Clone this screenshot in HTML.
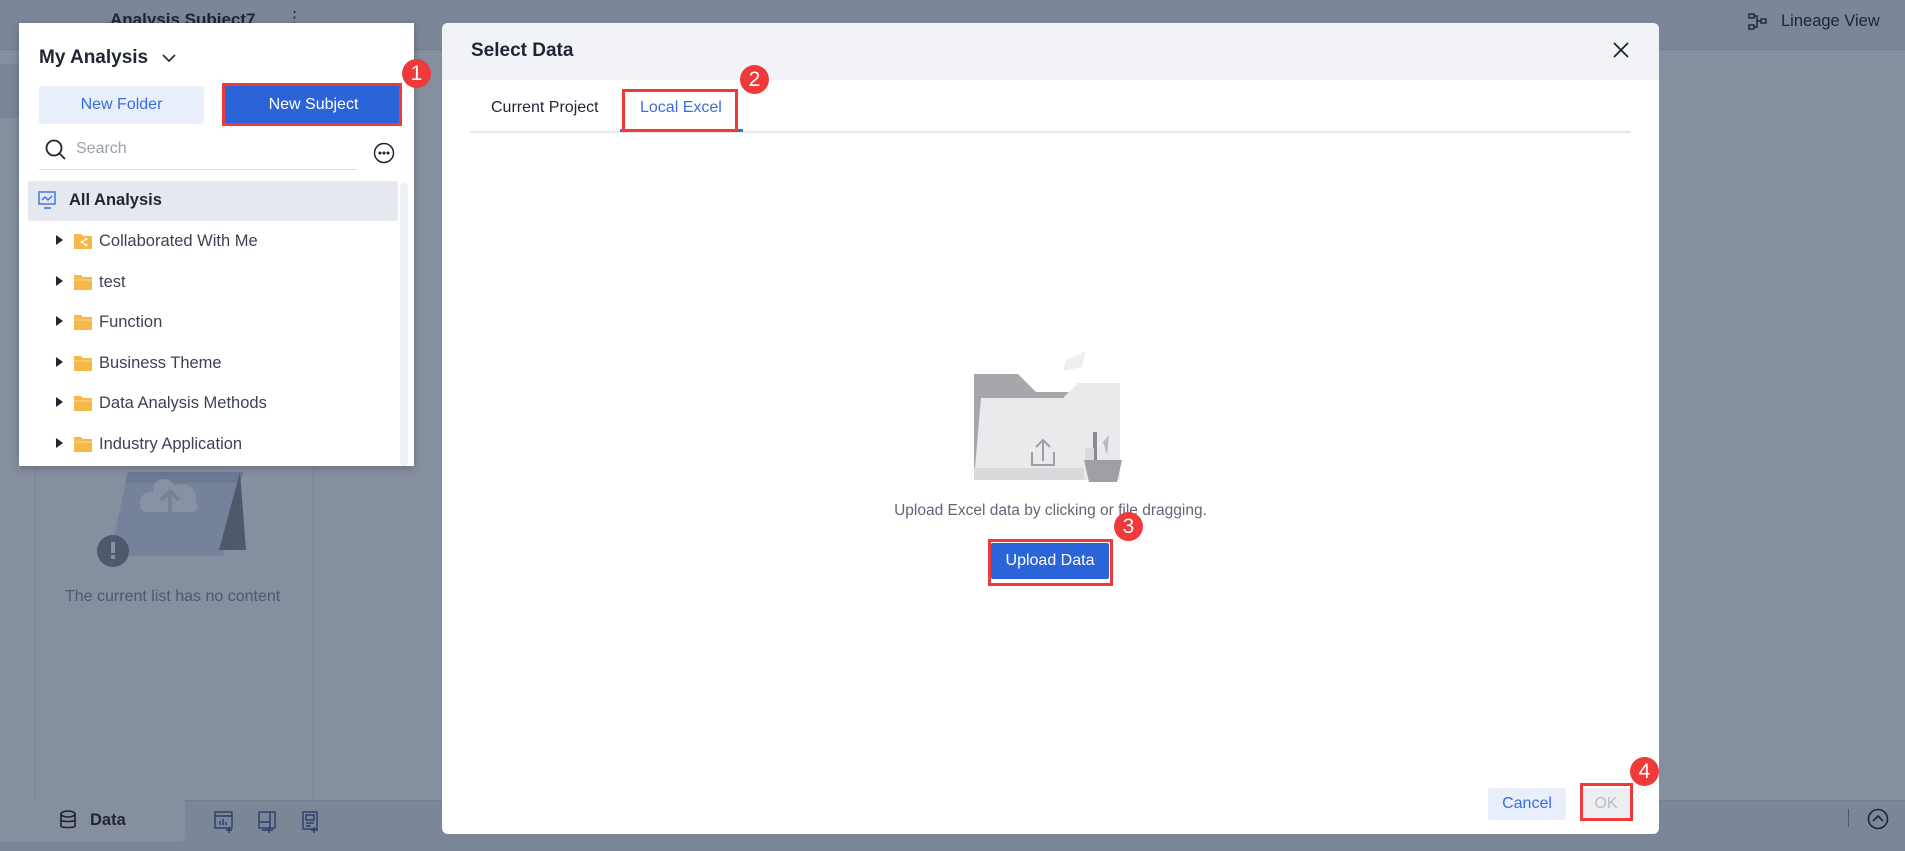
<!DOCTYPE html>
<html><head><meta charset="utf-8"><style>
*{margin:0;padding:0;box-sizing:border-box}
body{width:1905px;height:851px;overflow:hidden;background:#868fa0;font-family:"Liberation Sans",Arial,sans-serif;position:relative}
.abs{position:absolute}
.badge{position:absolute;width:29px;height:29px;border-radius:50%;background:#f03a3a;color:#fff;font-size:21px;text-align:center;line-height:29px}
.redbox{position:absolute;border:3px solid #f03a3a}
.item{position:absolute;left:0;width:370px;height:40px;font-size:16.5px;color:#3b4252;line-height:40px;white-space:nowrap}
.tri{position:absolute;left:37px;top:14px;width:0;height:0;border-left:7px solid #1f2533;border-top:5.5px solid transparent;border-bottom:5.5px solid transparent}
.fold{position:absolute;left:55px;top:12px;width:18px;height:16px}
.item span{position:absolute;left:80px}
</style></head><body>
<!-- top bar -->
<div class="abs" style="left:0;top:0;width:1905px;height:50px;background:#7c8699;border-bottom:1px solid #737d90"></div>
<div class="abs" style="left:110px;top:10px;font-size:17px;font-weight:bold;color:#1f2533">Analysis Subject7</div>
<div class="abs" style="left:286px;top:8px;font-size:17px;color:#1f2533">⋮</div>
<svg class="abs" style="left:1748px;top:13px" width="20" height="18" viewBox="0 0 20 18" fill="none" stroke="#1f2533" stroke-width="1.4"><rect x="1" y="1" width="5" height="4"/><rect x="1" y="12" width="5" height="4"/><path d="M6 3h3v11H6M9 8h4"/><rect x="13" y="6" width="5" height="4"/></svg>
<div class="abs" style="left:1781px;top:12px;font-size:16.5px;color:#1f2533">Lineage View</div>
<!-- left sidebar -->
<div class="abs" style="left:35px;top:50px;width:1px;height:750px;background:#7a8496"></div>
<div class="abs" style="left:313px;top:50px;width:1px;height:750px;background:#7a8496"></div>
<div class="abs" style="left:0;top:64px;width:35px;height:54px;background:#7c8699"></div>
<!-- calendar illus -->
<svg class="abs" style="left:95px;top:470px" width="160" height="100" viewBox="0 0 160 100">
<path d="M33 2h115l-20 84H15z" fill="#76829a"/><path d="M33 2h115l-3 11H30z" fill="#6d7990"/>
<path d="M145 2l6 78h-27z" fill="#4e5a6c"/>
<circle cx="69" cy="20" r="11" fill="#8791a3"/><circle cx="87" cy="28" r="14" fill="#8791a3"/><circle cx="55" cy="32" r="10" fill="#8791a3"/><rect x="45" y="30" width="58" height="12" rx="6" fill="#8791a3"/>
<path d="M75 45V22M66 30l9-9 9 9" stroke="#76829a" stroke-width="4" fill="none"/>
<circle cx="18" cy="81" r="16" fill="#4e5a6c"/><rect x="16" y="72" width="4" height="11" fill="#8791a3"/><rect x="16" y="85" width="4" height="4" fill="#8791a3"/>
</svg>
<div class="abs" style="left:65px;top:588px;font-size:16px;color:#4e5a6c">The current list has no content</div>
<!-- bottom bar -->
<div class="abs" style="left:0;top:800px;width:1905px;height:51px;background:#7c8699;border-top:1px solid #737d90"></div>
<div class="abs" style="left:0;top:800px;width:185px;height:42px;background:#868fa0;border-radius:0 0 6px 0"></div>
<svg class="abs" style="left:59px;top:810px" width="18" height="20" viewBox="0 0 18 20" fill="none" stroke="#1f2533" stroke-width="1.6"><ellipse cx="9" cy="4" rx="7" ry="3"/><path d="M2 4v12c0 2 14 2 14 0V4M2 10c0 2 14 2 14 0"/></svg>
<div class="abs" style="left:90px;top:811px;font-size:16.5px;font-weight:bold;color:#1f2533">Data</div>
<svg class="abs" style="left:214px;top:811px" width="110" height="22" fill="none" stroke="#2d3f66" stroke-width="1.4"><rect x="1" y="1" width="17" height="16"/><path d="M1 5h17M6 14v-4M9 14V8M12 14v-3M15 16v6M12 19h6" /><rect x="45" y="1" width="16" height="16"/><path d="M45 11h11M56 1v16M48 19h8M55 16v6M52 19h7"/><rect x="89" y="1" width="14" height="17"/><path d="M92 4h8v5h-8zM92 12h8M92 15h5M100 16v6M97 19h7"/></svg>
<div class="abs" style="left:1848px;top:809px;width:1px;height:18px;background:#4e5a6c"></div>
<svg class="abs" style="left:1867px;top:808px" width="22" height="22" fill="none" stroke="#1f2533" stroke-width="1.6"><circle cx="11" cy="11" r="9.5"/><path d="M6 13l5-5 5 5"/></svg>

<!-- left popup -->
<div class="abs" style="left:19px;top:23px;width:395px;height:443px;background:#fff;box-shadow:0 2px 8px rgba(0,0,0,.25)">
 <div class="abs" style="left:20px;top:24px;font-size:19px;font-weight:bold;color:#1f2533">My Analysis</div>
 <svg class="abs" style="left:142px;top:30px" width="16" height="10" fill="none" stroke="#1f2533" stroke-width="1.6"><path d="M2 2l6 6 6-6"/></svg>
 <div class="abs" style="left:20px;top:63px;width:165px;height:38px;background:#e8eefa;border-radius:3px;color:#3a6ee0;font-size:16px;text-align:center;line-height:38px">New Folder</div>
 <div class="abs" style="left:206px;top:63px;width:177px;height:38px;background:#2b63d9;color:#fff;font-size:16px;text-align:center;line-height:38px">New Subject</div>
 <svg class="abs" style="left:26px;top:116px" width="22" height="22" fill="none" stroke="#1f2533" stroke-width="1.8"><circle cx="9" cy="9" r="7.5"/><path d="M14.5 14.5L20 20"/></svg>
 <div class="abs" style="left:57px;top:117px;font-size:16px;color:#9aa1ae">Search</div>
 <div class="abs" style="left:20px;top:146px;width:318px;height:1px;background:#dcdfe6"></div>
 <svg class="abs" style="left:354px;top:119px" width="22" height="22" fill="none" stroke="#1f2533" stroke-width="1.5"><circle cx="11" cy="11" r="9.5"/><circle cx="7" cy="11" r=".8" fill="#1f2533"/><circle cx="11" cy="11" r=".8" fill="#1f2533"/><circle cx="15" cy="11" r=".8" fill="#1f2533"/></svg>
 <div class="abs" style="left:9px;top:158px;width:370px;height:40px;background:#e6e8ef;border-radius:2px"></div>
 <svg class="abs" style="left:19px;top:168px" width="19" height="19" fill="none" stroke="#3a6ee0" stroke-width="1.4"><rect x="1" y="1" width="16" height="12"/><path d="M4 9l3-3 3 3 4-4M6 17h7"/></svg>
 <div class="abs" style="left:50px;top:168px;font-size:16.5px;font-weight:bold;color:#1f2533">All Analysis</div>
 <div class="abs" style="left:381px;top:160px;width:8px;height:283px;background:#eef0f4;border-radius:4px"></div>
 <div class="item" style="top:198px"><div class="tri"></div><svg class="fold" viewBox="0 0 18 16"><path d="M0 1h7l2 2h9v13H0z" fill="#f5b94a"/><circle cx="8" cy="9" r="1.3" fill="#fff"/><circle cx="12" cy="6" r="1.3" fill="#fff"/><circle cx="12" cy="12" r="1.3" fill="#fff"/><path d="M8 9l4-3M8 9l4 3" stroke="#fff"/></svg><span>Collaborated With Me</span></div>
 <div class="item" style="top:239px"><div class="tri"></div><svg class="fold" viewBox="0 0 18 16"><path d="M0 1h7l2 2h9v13H0z" fill="#f5b94a"/><path d="M0 6h18" stroke="#fcd88f"/></svg><span>test</span></div>
 <div class="item" style="top:279px"><div class="tri"></div><svg class="fold" viewBox="0 0 18 16"><path d="M0 1h7l2 2h9v13H0z" fill="#f5b94a"/><path d="M0 6h18" stroke="#fcd88f"/></svg><span>Function</span></div>
 <div class="item" style="top:320px"><div class="tri"></div><svg class="fold" viewBox="0 0 18 16"><path d="M0 1h7l2 2h9v13H0z" fill="#f5b94a"/><path d="M0 6h18" stroke="#fcd88f"/></svg><span>Business Theme</span></div>
 <div class="item" style="top:360px"><div class="tri"></div><svg class="fold" viewBox="0 0 18 16"><path d="M0 1h7l2 2h9v13H0z" fill="#f5b94a"/><path d="M0 6h18" stroke="#fcd88f"/></svg><span>Data Analysis Methods</span></div>
 <div class="item" style="top:401px"><div class="tri"></div><svg class="fold" viewBox="0 0 18 16"><path d="M0 1h7l2 2h9v13H0z" fill="#f5b94a"/><path d="M0 6h18" stroke="#fcd88f"/></svg><span>Industry Application</span></div>
</div>
<div class="redbox" style="left:222px;top:83px;width:180px;height:43px"></div>
<div class="badge" style="left:402px;top:59px">1</div>

<!-- modal -->
<div class="abs" style="left:442px;top:23px;width:1217px;height:811px;background:#fff;border-radius:6px;overflow:hidden">
 <div class="abs" style="left:0;top:0;width:1217px;height:57px;background:#f2f3f7"></div>
 <div class="abs" style="left:29px;top:17px;font-size:19px;font-weight:bold;color:#1f2533">Select Data</div>
 <svg class="abs" style="left:1170px;top:18px" width="18" height="18" stroke="#1f2533" stroke-width="1.8"><path d="M2 2l14 14M16 2L2 16"/></svg>
 <div class="abs" style="left:49px;top:76px;font-size:16px;color:#1f2533">Current Project</div>
 <div class="abs" style="left:198px;top:76px;font-size:16px;color:#3a6ee0">Local Excel</div>
 <div class="abs" style="left:28px;top:108px;width:1161px;height:2px;background:#e6e8ef"></div>
 <div class="abs" style="left:178px;top:106px;width:123px;height:3px;background:#3a6ee0"></div>
 <!-- illustration -->
 <svg class="abs" style="left:530px;top:327px" width="160" height="132" viewBox="0 0 160 132">
  <path d="M94 10l20-9-4 16-19 4z" fill="#eeeff1"/>
  <path d="M2 24h44l18 18h54v88H2z" fill="#a5a7ab"/>
  <path d="M9 48h82l15-15h42v97H2z" fill="#e9eaec"/>
  <path d="M2 118h110v12H2z" fill="#d9dadc"/>
  <path d="M60 102v13h22v-13M71 111V90M64 97l7-7 7 7" stroke="#9d9fa3" stroke-width="2" fill="none"/>
  <rect x="121" y="82" width="4" height="28" fill="#8a8c90"/><path d="M131 92l6-7-2 20z" fill="#b9bbbf"/><rect x="113" y="98" width="9" height="14" fill="#d9dadc"/>
  <path d="M112 110h38l-5 22h-28z" fill="#9d9fa3"/>
 </svg>
 <div class="abs" style="left:0;top:479px;width:1217px;text-align:center;font-size:15.5px;color:#5f6675">Upload Excel data by clicking or file dragging.</div>
 <div class="abs" style="left:549px;top:520px;width:118px;height:36px;background:#2b63d9;border-radius:2px;color:#fff;font-size:16px;text-align:center;line-height:36px">Upload Data</div>
 <div class="abs" style="left:1046px;top:765px;width:78px;height:32px;background:#e8eefa;border-radius:3px;color:#3a6ee0;font-size:16px;text-align:center;line-height:32px">Cancel</div>
 <div class="abs" style="left:1138px;top:765px;width:52px;height:32px;background:#eceef2;border-radius:3px;color:#b8bcc6;font-size:16px;text-align:center;line-height:32px">OK</div>
</div>
<div class="redbox" style="left:622px;top:89px;width:116px;height:43px"></div>
<div class="badge" style="left:740px;top:65px">2</div>
<div class="redbox" style="left:988px;top:539px;width:125px;height:47px"></div>
<div class="badge" style="left:1114px;top:512px">3</div>
<div class="redbox" style="left:1580px;top:783px;width:53px;height:38px"></div>
<div class="badge" style="left:1630px;top:757px">4</div>
</body></html>
